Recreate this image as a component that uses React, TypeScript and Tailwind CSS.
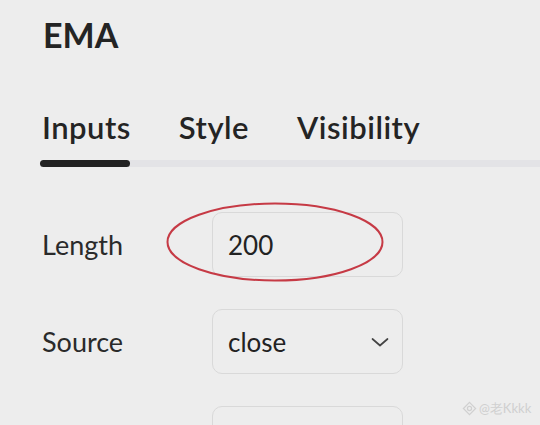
const ROWS = [
  { label: "Length", value: "200", select: false },
  { label: "Source", value: "close", select: true },
  { label: "Offset", value: "0", select: false },
];

export default function App() {
  return (
    <div
      className="relative h-[425px] w-[540px] overflow-hidden bg-[#ededed] text-[#242424]"
      style={{ fontFamily: "Lato, 'Open Sans', sans-serif" }}
    >
      {/* Title */}
      <div className="ml-[43px] mt-[18px] h-[34px] text-[34px] font-bold leading-none">EMA</div>

      {/* Tabs */}
      <div className="ml-[40px] mt-[60px]">
        <div className="flex h-[30px] gap-[48px] pl-[2px] text-[31px] font-semibold leading-none tracking-[0.5px]">
          <span>Inputs</span>
          <span>Style</span>
          <span>Visibility</span>
        </div>
        <div className="mt-[18px] h-[7px] rounded-l-full bg-[#e3e3e6]">
          <div className="h-full w-[90px] rounded-full bg-[#222]" />
        </div>
      </div>

      {/* Inputs */}
      <div className="mt-[45px] flex flex-col gap-[32px]">
        {ROWS.map((row) => (
          <div key={row.label} className="flex h-[65px] items-center">
            <div className="w-[212px] pl-[42px] text-[27px] leading-none text-[#2a2a2a]">{row.label}</div>
            <div className="flex h-[65px] w-[191px] items-center justify-between rounded-[10px] border border-[#d9d9d9] pl-[15px] pr-[12px] text-[26px] leading-none text-[#222]">
              <span>{row.value}</span>
              {row.select && (
                <svg width="20" height="10" viewBox="0 0 20 10" fill="none" stroke="#444" strokeWidth="1.7" strokeLinecap="round" strokeLinejoin="round">
                  <path d="M2.5 2 L10 8.5 L17.5 2" />
                </svg>
              )}
            </div>
          </div>
        ))}
      </div>

      {/* highlight ellipse */}
      <svg className="absolute left-[165px] top-[201px]" width="220" height="82" viewBox="0 0 220 82">
        <ellipse cx="110" cy="41" rx="107.5" ry="38.5" fill="none" stroke="#c63a45" strokeWidth="2" />
      </svg>

      {/* watermark */}
      <div className="absolute left-[462px] top-[401px] flex items-center gap-[2px] text-[13px] leading-none text-[#d0d0d0]">
        <svg width="15" height="15" viewBox="0 0 16 16" fill="none" stroke="#d0d0d0" strokeWidth="1.3">
          <path d="M8 1.5 L14.5 8 L8 14.5 L1.5 8 Z" />
          <circle cx="8" cy="8" r="2.2" />
        </svg>
        <span>@老Kkkk</span>
      </div>
    </div>
  );
}
